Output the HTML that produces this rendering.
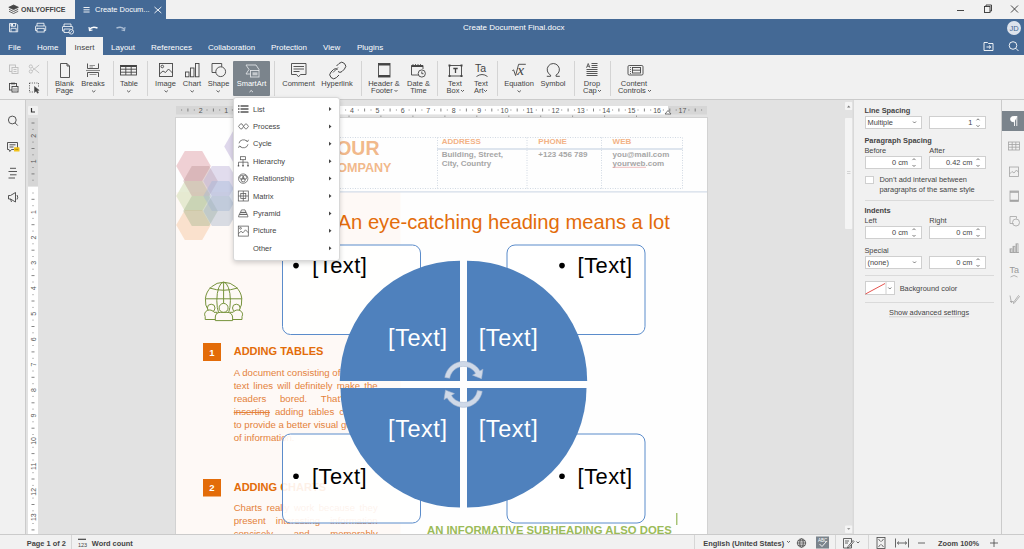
<!DOCTYPE html>
<html><head><meta charset="utf-8">
<style>
*{box-sizing:border-box}
html,body{margin:0;padding:0}
body{width:1024px;height:549px;overflow:hidden;position:relative;background:#f1f1f1;font-family:"Liberation Sans",sans-serif;color:#444;font-size:8.5px}
.a{position:absolute}
svg{position:absolute;overflow:visible}
#titlebar{left:0;top:0;width:1024px;height:19px;background:#f1f1f1}
#header{left:0;top:19px;width:1024px;height:36px;background:#446995}
#toolbar{left:0;top:55px;width:1024px;height:45px;background:#f1f1f1;border-bottom:1px solid #cbcbcb}
#lside{left:0;top:100px;width:26px;height:434px;background:#f1f1f1;border-right:1px solid #cbcbcb}
#docarea{left:26px;top:100px;width:827px;height:434px;background:#e2e2e2;overflow:hidden}
#rpanel{left:854px;top:100px;width:147px;height:434px;background:#f1f1f1}
#rcol{left:1001px;top:100px;width:23px;height:434px;background:#f1f1f1;border-left:1px solid #cbcbcb}
#status{left:0;top:534px;width:1024px;height:15px;background:#f1f1f1;border-top:1px solid #cbcbcb}
.tl{font-size:7.5px;line-height:7px;color:#444;text-align:center;transform:translateX(-50%);white-space:nowrap}
.body{width:144px;font-size:9.6px;line-height:12.96px;color:#e4823b}
.j{text-align:justify;text-align-last:justify;white-space:nowrap}
.mi{left:253px;font-size:7.5px;line-height:10px;color:#444;white-space:nowrap}
.pl{font-size:7.4px;line-height:10px;color:#444;white-space:nowrap}
.inp{background:#fff;border:1px solid #cfcfcf;font-size:7.4px;line-height:11.7px;color:#444;text-align:right;white-space:nowrap}
.st{font-size:7.4px;font-weight:bold;line-height:10px;color:#444;white-space:nowrap}
.tab{position:absolute;top:37.5px;height:18px;line-height:19px;color:#fff;font-size:8px}
</style></head><body>
<div id="titlebar" class="a"></div>
<div id="header" class="a"></div>
<div id="toolbar" class="a"></div>

<!-- TITLEBAR -->
<svg style="left:0;top:0" width="1024" height="19">
  <g fill="none" stroke="#444" stroke-width="0.8">
    <path d="M13.6 5 L18.4 7.3 L13.6 9.6 L8.8 7.3 Z" fill="#444"/>
    <path d="M9 9.3 L13.6 11.5 L18.2 9.3"/>
    <path d="M9 11.3 L13.6 13.5 L18.2 11.3"/>
  </g>
  <rect x="75" y="0" width="91" height="19" fill="#446995"/>
  <g stroke="#fff" stroke-width="0.9" fill="none">
    <path d="M83.5 7.5H89.6M83.5 9.8H89.6M83.5 12H89.6"/>
    <path d="M154.5 7L161.3 13M161.3 7L154.5 13"/>
  </g>
  <g stroke="#333" stroke-width="0.9" fill="none">
    <path d="M957 10.5H964"/>
    <rect x="984.5" y="6.5" width="5.5" height="6"/>
    <path d="M986 6.5V5H991.5V11H990"/>
    <path d="M1011 5.5L1018 12.5M1018 5.5L1011 12.5"/>
  </g>
</svg>
<div class="a" style="left:21px;top:4.5px;font-weight:bold;font-size:7px;color:#444;line-height:10px;letter-spacing:0">ONLYOFFICE</div>
<div class="a" style="left:95px;top:4.5px;font-size:7.5px;color:#fff;line-height:10px">Create Docum...</div>
<!-- HEADER -->
<svg style="left:0;top:19px" width="1024" height="36">
  <g stroke="#fff" stroke-width="0.8" fill="none">
    <!-- save -->
    <path d="M9.5 4.5H16.2L17.7 6V12.8H9.5Z"/>
    <path d="M11 4.5V7.3H15.5V4.5"/>
    <rect x="11.2" y="5" width="1.8" height="1.8" fill="#fff" stroke="none"/>
    <path d="M11 12.8V9.3H16.2V12.8"/>
    <!-- print -->
    <path d="M37 7V4.3H44V7"/>
    <path d="M37 11.5H35.5V7.5Q35.5 7 36 7H45.2Q45.7 7 45.7 7.5V11.5H44.2"/>
    <rect x="37" y="9.3" width="7.2" height="3.7"/>
    <!-- quick print -->
    <path d="M64 7.5V5H71V7.5"/>
    <path d="M64 12H62.5V8Q62.5 7.5 63 7.5H72.2Q72.7 7.5 72.7 8V10.5"/>
    <path d="M69 13.5H64V10H70.5"/>
    <circle cx="71.3" cy="12.8" r="2.3" fill="#446995"/>
    <path d="M70.2 13.9L72.6 11.5" stroke-width="0.7"/>
    <!-- undo -->
    <path d="M89.5 10.5 Q92 7 97.5 9" stroke-width="1.6"/>
    <path d="M89 8 L89.5 11.5 L92.5 11" stroke-width="1.2"/>
  </g>
  <g stroke="#a9bcd3" stroke-width="1.4" fill="none">
    <path d="M124.5 10.5 Q122 7 116.5 9"/>
    <path d="M125 8 L124.5 11.5 L121.5 11" stroke-width="1.1"/>
  </g>
  <circle cx="1014" cy="9" r="7" fill="#dde3ec"/>
  <text x="1014" y="12" font-size="7.5" fill="#446995" text-anchor="middle" font-family="Liberation Sans">JD</text>
  <g stroke="#fff" stroke-width="0.9" fill="none">
    <path d="M984 23.5H987.5L988.5 24.5H993V31.5H984Z"/>
    <path d="M986.5 28H990.5M989 26.5L990.8 28L989 29.5"/>
    <circle cx="1013" cy="26.5" r="3.8"/>
    <path d="M1015.8 29.3L1018.5 32"/>
  </g>
</svg>
<div class="a" style="left:463px;top:23px;font-size:8px;color:#fff;line-height:10px">Create Document Final.docx</div>
<div class="a" style="left:66px;top:37px;width:37px;height:18px;background:#f1f1f1"></div>
<div class="tab" style="left:8px">File</div>
<div class="tab" style="left:37px">Home</div>
<div class="tab" style="left:74.5px;color:#444">Insert</div>
<div class="tab" style="left:111px">Layout</div>
<div class="tab" style="left:151px">References</div>
<div class="tab" style="left:208px">Collaboration</div>
<div class="tab" style="left:271px">Protection</div>
<div class="tab" style="left:323px">View</div>
<div class="tab" style="left:357px">Plugins</div>


<!-- TOOLBAR -->
<div class="a" style="left:233px;top:61px;width:37px;height:34.5px;background:#7b848c;border-radius:1px"></div>
<svg style="left:0;top:0" width="1024" height="100">
  <g stroke="#d4d4d4" stroke-width="1">
    <path d="M47.5 61V96M113.5 61V96M147.5 61V96M274.5 61V96M361.5 61V96M437.5 61V96M497.5 61V96M574.5 61V96M610.5 61V96"/>
  </g>
  <g fill="none" stroke="#bdbdbd" stroke-width="0.9">
    <!-- copy disabled -->
    <rect x="9.5" y="65" width="6" height="6.5"/>
    <rect x="12" y="67.5" width="6" height="6" fill="#f1f1f1"/>
    <path d="M13.5 69.5H16.5M13.5 71.5H16.5"/>
    <!-- cut disabled -->
    <circle cx="30.8" cy="66.5" r="1.6"/><circle cx="30.8" cy="71.5" r="1.6"/>
    <path d="M32.2 67.3L39.2 73M32.2 70.7L39.2 65"/>
  </g>
  <g fill="none" stroke="#444" stroke-width="0.9">
    <!-- paste -->
    <rect x="9.5" y="83.5" width="7" height="6.5"/>
    <path d="M11 83.5H15" stroke-width="1.6"/>
    <rect x="12" y="86.5" width="6" height="5.5" fill="#f1f1f1"/>
    <path d="M14 88V91M16 88V91" stroke="#777"/>
    <!-- select all -->
    <path d="M29.5 83V92M29.5 83H38.5V87M29.5 92H33" stroke-dasharray="1 1.3"/>
    <path d="M34.5 86.5L34.5 92.5L36 91L37.5 93.3L38.5 92.7L37.2 90.5L39.2 90.3Z" fill="#444" stroke-width="0.5"/>
    <!-- blank page -->
    <path d="M60.5 63.5H67L69.5 66V77.5H60.5Z"/>
    <path d="M67 63.5V66H69.5"/>
    <!-- breaks -->
    <path d="M87.5 63.5V68.5H98.5V63.5"/>
    <path d="M89.5 65.5H95M89.5 67H93" stroke="#888"/>
    <path d="M86 70.5H100" stroke="#888" stroke-width="1.1"/>
    <path d="M87.5 77V72.5H98.5V77"/>
    <path d="M89.5 74.5H96.5" stroke="#888"/>
    <!-- table -->
    <rect x="120.5" y="65.5" width="16" height="9.5"/>
    <path d="M120.5 66H136.5" stroke-width="2"/>
    <path d="M120.5 69.2H136.5M120.5 72.2H136.5M125.8 65.5V75M131.2 65.5V75"/>
    <!-- image -->
    <rect x="159.5" y="63.5" width="13" height="13"/>
    <circle cx="162.3" cy="66.5" r="1.3"/>
    <path d="M159.5 74L163 71L165.5 72.5L168.5 69L172.5 73"/>
    <!-- chart -->
    <rect x="185.5" y="72" width="3.5" height="4.8"/>
    <rect x="190.5" y="68" width="3.5" height="8.8"/>
    <rect x="195.5" y="63.5" width="3.5" height="13.3"/>
    <!-- shape -->
    <path d="M216 72.5H212V63.5H221.7V66.8"/>
    <circle cx="220.7" cy="71.7" r="4.9"/>
    <!-- comment -->
    <path d="M291.5 63.5H306V74.5H300.5L298.5 76.8L296.5 74.5H291.5Z"/>
    <path d="M293.5 66.5H304M293.5 69H304M293.5 71.5H299.5"/>
    <!-- hyperlink -->
    <path d="M333 72.5L338 67.5" />
    <path d="M336.5 66L339 63.5A3 3 0 0 1 344.5 69L342 71.5A3 3 0 0 1 338 71.5" stroke-width="1"/>
    <path d="M337.5 69.5A3 3 0 0 0 333.5 69.5L331 72A3 3 0 0 0 336.5 77.5L339 75" stroke-width="1"/>
    <!-- header footer -->
    <rect x="378.5" y="63.5" width="11.5" height="13.5"/>
    <path d="M378.5 64.5H390M378.5 76H390" stroke-width="2"/>
    <!-- date & time -->
    <path d="M419 75H411.5V65.5H423V69"/>
    <path d="M411.5 66.2H423" stroke-width="1.6"/>
    <path d="M413 64V65.5M415.5 64V65.5M418 64V65.5M420.5 64V65.5" stroke-width="0.8"/>
    <circle cx="421.8" cy="73.5" r="3.6" fill="#f1f1f1"/>
    <path d="M421.8 71.5V73.7H423.5"/>
    <!-- text box -->
    <rect x="449.5" y="65.5" width="12" height="10.5"/>
    <rect x="448.5" y="64.5" width="2" height="2" fill="#444" stroke="none"/>
    <rect x="460.5" y="64.5" width="2" height="2" fill="#444" stroke="none"/>
    <rect x="448.5" y="75" width="2" height="2" fill="#444" stroke="none"/>
    <rect x="460.5" y="75" width="2" height="2" fill="#444" stroke="none"/>
    <path d="M453.3 68.5H457.7M455.5 68.5V73" stroke-width="1.3"/>
    <!-- drop cap -->
    <path d="M591.5 63.5H597.5M591.5 65.5H597.5M591.5 67.5H597.5M586.5 69.5H597.5M586.5 71.5H597.5M586.5 73.5H597.5M586.5 75.5H597.5"/>
    <path d="M586.5 67.8L588.2 63.5L590 67.8M587.2 66.3H589.3" stroke-width="0.8"/>
    <!-- content controls -->
    <rect x="628" y="65.5" width="15" height="9.5" rx="1.2"/>
    <path d="M630 67.5H631M630 69.5H631M630 71.5H631M630 73.5H631" stroke-width="0.8"/>
    <rect x="632.5" y="67.5" width="8" height="5.5"/>
    <path d="M632.5 70.2H640.5"/>
  </g>
  <g fill="none" stroke="#f1f1f1" stroke-width="0.9">
    <path d="M246 65H256L259 69.5L256 74H246L249 69.5Z" stroke="#dfe2e5"/>
    <rect x="250.5" y="70.5" width="8.5" height="6.5" fill="#7b848c" stroke="#dfe2e5"/>
    <rect x="252.5" y="72.3" width="5" height="3" fill="#c5c9cd" stroke="none"/>
  </g>
  <!-- text art -->
  <text x="475" y="72" font-family="Liberation Sans" font-size="10.5" fill="#444">Ta</text>
  <path d="M476.5 76.5Q482 72.5 487.5 76.5" fill="none" stroke="#444" stroke-width="0.9"/>
  <!-- equation -->
  <text x="517.3" y="75.3" font-family="Liberation Serif" font-size="15.5" font-style="italic" fill="#444">x</text>
  <path d="M512.3 70.6L513.6 69.9L515.6 75.6L518.6 64.3H525.8" fill="none" stroke="#444" stroke-width="0.9"/>
  <!-- symbol -->
  <path d="M546.8 76.3H550.6V75.1A6.1 6.1 0 1 1 556 75.1V76.3H559.8" fill="none" stroke="#444" stroke-width="0.95"/>
  <!-- chevrons -->
  <g fill="none" stroke="#444" stroke-width="0.85">
    <path d="M92 90.5L93.7 92L95.4 90.5M127 90.5L128.7 92L130.4 90.5M164.5 90.5L166.2 92L167.9 90.5M190.5 90.5L192.2 92L193.9 90.5M216.5 90.5L218.2 92L219.9 90.5M517.5 90.5L519.2 92L520.9 90.5"/>
    <path d="M394.5 90L396 91.5L397.5 90M461 90L462.5 91.5L464 90M484 90L485.5 91.5L487 90M598 90L599.5 91.5L601 90M648 90L649.5 91.5L651 90"/>
  </g>
  <path d="M249.5 92L251.2 90.5L252.9 92" fill="none" stroke="#fff" stroke-width="0.8"/>
</svg>
<div class="a tl" style="left:64.5px;top:80px">Blank<br>Page</div>
<div class="a tl" style="left:93px;top:80px">Breaks</div>
<div class="a tl" style="left:129px;top:80px">Table</div>
<div class="a tl" style="left:165.5px;top:80px">Image</div>
<div class="a tl" style="left:192px;top:80px">Chart</div>
<div class="a tl" style="left:218.5px;top:80px">Shape</div>
<div class="a tl" style="left:251.5px;top:80px;color:#fff">SmartArt</div>
<div class="a tl" style="left:298.5px;top:80px">Comment</div>
<div class="a tl" style="left:337px;top:80px">Hyperlink</div>
<div class="a tl" style="left:384px;top:80px">Header &amp;<br>Footer&nbsp;&nbsp;</div>
<div class="a tl" style="left:418.5px;top:80px">Date &amp;<br>Time</div>
<div class="a tl" style="left:455px;top:80px">Text<br>Box&nbsp;&nbsp;</div>
<div class="a tl" style="left:481px;top:80px">Text<br>Art&nbsp;&nbsp;</div>
<div class="a tl" style="left:519px;top:80px">Equation</div>
<div class="a tl" style="left:553px;top:80px">Symbol</div>
<div class="a tl" style="left:592px;top:80px">Drop<br>Cap&nbsp;&nbsp;</div>
<div class="a tl" style="left:634px;top:80px">Content<br>Controls&nbsp;&nbsp;</div>

<div id="lside" class="a"></div>
<div id="docarea" class="a"></div>
<!-- LEFT SIDEBAR -->
<svg style="left:0;top:0" width="30" height="549">
  <g fill="none" stroke="#444" stroke-width="0.9">
    <circle cx="12.3" cy="120" r="3.9"/>
    <path d="M15 122.8L17.8 125.6"/>
    <path d="M7.5 142.5H17.5V149.5H11.5L9.8 151.5L9 149.5H7.5Z"/>
    <path d="M9.5 144.8H15.5M9.5 147H13.5"/>
    <path d="M10 168.3H16M8.5 171.5H17M10 174.8H16.5M8.5 178H15"/>
    <path d="M8.5 195.5H10.5L15.5 192.5V202L10.5 199H8.5Z"/>
    <path d="M17 195Q18.5 197.3 17 199.5" />
    <path d="M10.5 199L11.5 202"/>
  </g>
  <rect x="14" y="147.3" width="5.5" height="4.2" rx="0.6" fill="#f1c21b"/>
  <path d="M15.2 149.4H18.3" stroke="#8a7000" stroke-width="0.6"/>
</svg>


<!-- DOC AREA -->
<svg style="left:0;top:0" width="1024" height="549">
  <!-- horizontal ruler -->
  <rect x="176" y="106" width="531" height="8.5" fill="#d6d6d6"/>
  <rect x="251" y="106" width="417" height="8.5" fill="#fff"/>
  <!-- corner -->
  <rect x="28" y="106" width="10" height="9" fill="#f1f1f1" rx="1"/>
  <path d="M31.5 108V112H35" fill="none" stroke="#333" stroke-width="1.2"/>
  <!-- vertical ruler -->
  <rect x="28" y="118" width="10" height="416" fill="#fff"/>
  <rect x="28" y="118" width="10" height="68.6" fill="#d6d6d6"/>
  <g font-family="Liberation Sans" font-size="7" fill="#555"><text x="200.6" y="112.8" text-anchor="middle">2</text><text x="226.1" y="112.8" text-anchor="middle">1</text><text x="275.6" y="112.8" text-anchor="middle">1</text><text x="301.1" y="112.8" text-anchor="middle">2</text><text x="326.5" y="112.8" text-anchor="middle">3</text><text x="351.9" y="112.8" text-anchor="middle">4</text><text x="377.4" y="112.8" text-anchor="middle">5</text><text x="402.8" y="112.8" text-anchor="middle">6</text><text x="428.2" y="112.8" text-anchor="middle">7</text><text x="453.6" y="112.8" text-anchor="middle">8</text><text x="479.1" y="112.8" text-anchor="middle">9</text><text x="504.5" y="112.8" text-anchor="middle">10</text><text x="529.9" y="112.8" text-anchor="middle">11</text><text x="555.4" y="112.8" text-anchor="middle">12</text><text x="580.8" y="112.8" text-anchor="middle">13</text><text x="606.2" y="112.8" text-anchor="middle">14</text><text x="631.6" y="112.8" text-anchor="middle">15</text><text x="657.1" y="112.8" text-anchor="middle">16</text><text x="682.5" y="112.8" text-anchor="middle">17</text><text x="0" y="0" transform="translate(35.8 135.7) rotate(-90)" text-anchor="middle">2</text><text x="0" y="0" transform="translate(35.8 161.2) rotate(-90)" text-anchor="middle">1</text><text x="0" y="0" transform="translate(35.8 212.0) rotate(-90)" text-anchor="middle">1</text><text x="0" y="0" transform="translate(35.8 237.5) rotate(-90)" text-anchor="middle">2</text><text x="0" y="0" transform="translate(35.8 262.9) rotate(-90)" text-anchor="middle">3</text><text x="0" y="0" transform="translate(35.8 288.3) rotate(-90)" text-anchor="middle">4</text><text x="0" y="0" transform="translate(35.8 313.8) rotate(-90)" text-anchor="middle">5</text><text x="0" y="0" transform="translate(35.8 339.2) rotate(-90)" text-anchor="middle">6</text><text x="0" y="0" transform="translate(35.8 364.6) rotate(-90)" text-anchor="middle">7</text><text x="0" y="0" transform="translate(35.8 390.0) rotate(-90)" text-anchor="middle">8</text><text x="0" y="0" transform="translate(35.8 415.5) rotate(-90)" text-anchor="middle">9</text><text x="0" y="0" transform="translate(35.8 440.9) rotate(-90)" text-anchor="middle">10</text><text x="0" y="0" transform="translate(35.8 466.3) rotate(-90)" text-anchor="middle">11</text><text x="0" y="0" transform="translate(35.8 491.8) rotate(-90)" text-anchor="middle">12</text><text x="0" y="0" transform="translate(35.8 517.2) rotate(-90)" text-anchor="middle">13</text></g>
  <g stroke="#666" stroke-width="0.8" fill="none"><path d="M181.6 109.5V110.5M187.9 108.5V111.5M194.3 109.5V110.5M207.0 109.5V110.5M213.4 108.5V111.5M219.7 109.5V110.5M232.4 109.5V110.5M238.8 108.5V111.5M245.1 109.5V110.5M256.6 109.5V110.5M262.9 108.5V111.5M269.3 109.5V110.5M282.0 109.5V110.5M288.3 108.5V111.5M294.7 109.5V110.5M307.4 109.5V110.5M313.8 108.5V111.5M320.1 109.5V110.5M332.8 109.5V110.5M339.2 108.5V111.5M345.6 109.5V110.5M358.3 109.5V110.5M364.6 108.5V111.5M371.0 109.5V110.5M383.7 109.5V110.5M390.1 108.5V111.5M396.4 109.5V110.5M409.1 109.5V110.5M415.5 108.5V111.5M421.9 109.5V110.5M434.6 109.5V110.5M440.9 108.5V111.5M447.3 109.5V110.5M460.0 109.5V110.5M466.4 108.5V111.5M472.7 109.5V110.5M485.4 109.5V110.5M491.8 108.5V111.5M498.1 109.5V110.5M510.9 109.5V110.5M517.2 108.5V111.5M523.6 109.5V110.5M536.3 109.5V110.5M542.6 108.5V111.5M549.0 109.5V110.5M561.7 109.5V110.5M568.1 108.5V111.5M574.4 109.5V110.5M587.1 109.5V110.5M593.5 108.5V111.5M599.9 109.5V110.5M612.6 109.5V110.5M618.9 108.5V111.5M625.3 109.5V110.5M638.0 109.5V110.5M644.4 108.5V111.5M650.7 109.5V110.5M663.4 109.5V110.5M669.8 108.5V111.5M676.2 109.5V110.5M688.9 109.5V110.5M695.2 108.5V111.5M701.6 109.5V110.5M31.5 123.0H34.5M32.5 129.4H33.5M32.5 142.1H33.5M31.5 148.5H34.5M32.5 154.8H33.5M32.5 167.5H33.5M31.5 173.9H34.5M32.5 180.2H33.5M32.5 193.0H33.5M31.5 199.3H34.5M32.5 205.7H33.5M32.5 218.4H33.5M31.5 224.7H34.5M32.5 231.1H33.5M32.5 243.8H33.5M31.5 250.2H34.5M32.5 256.5H33.5M32.5 269.2H33.5M31.5 275.6H34.5M32.5 282.0H33.5M32.5 294.7H33.5M31.5 301.0H34.5M32.5 307.4H33.5M32.5 320.1H33.5M31.5 326.5H34.5M32.5 332.8H33.5M32.5 345.5H33.5M31.5 351.9H34.5M32.5 358.3H33.5M32.5 371.0H33.5M31.5 377.3H34.5M32.5 383.7H33.5M32.5 396.4H33.5M31.5 402.8H34.5M32.5 409.1H33.5M32.5 421.8H33.5M31.5 428.2H34.5M32.5 434.5H33.5M32.5 447.3H33.5M31.5 453.6H34.5M32.5 460.0H33.5M32.5 472.7H33.5M31.5 479.0H34.5M32.5 485.4H33.5M32.5 498.1H33.5M31.5 504.5H34.5M32.5 510.8H33.5M32.5 523.5H33.5M31.5 529.9H34.5"/></g>
  <path d="M253.2 115.5V117.5M285.1 115.5V117.5M317.1 115.5V117.5M349.0 115.5V117.5M380.9 115.5V117.5M412.9 115.5V117.5M444.9 115.5V117.5M476.8 115.5V117.5M508.8 115.5V117.5M540.7 115.5V117.5M572.6 115.5V117.5M604.6 115.5V117.5M636.5 115.5V117.5" stroke="#888" stroke-width="0.8"/>
  <!-- indent marker -->
  <path d="M665 114L668 110.5L671 114Z" fill="#fff" stroke="#555" stroke-width="0.8"/>
  <!-- scrollbar -->
  <rect x="845" y="102" width="7.5" height="8" rx="1" fill="#f4f4f4"/>
  <path d="M847 107.5L848.7 105.5L850.4 107.5Z" fill="#777"/>
  <rect x="845" y="118" width="7.5" height="111" rx="1" fill="#f4f4f4"/>
  <path d="M847 171.5H850.5M847 173.5H850.5" stroke="#ccc" stroke-width="0.8"/>
  <rect x="845" y="525.5" width="7.5" height="7.5" rx="1" fill="#f4f4f4"/>
  <path d="M847 528L848.7 530L850.4 528Z" fill="#999"/>
  <rect x="852.5" y="100" width="1.5" height="434" fill="#d9d9d9"/>
</svg>
<div class="a" style="left:176px;top:118px;width:531px;height:416px;background:#fefefe;overflow:hidden;box-shadow:0 0 0 1px #d2d2d2" id="page">
<svg style="left:-176px;top:-118px" width="1024" height="549">
  <rect x="176" y="192" width="224.5" height="342" fill="#fef9f6"/>
  <!-- logo text -->
  <text x="379.5" y="155.4" font-family="Liberation Sans" font-weight="bold" font-size="19.5" fill="#f0b07c" fill-opacity="0.9" text-anchor="end">YOUR</text>
  <text x="391.5" y="171.7" font-family="Liberation Sans" font-weight="bold" font-size="12.6" fill="#f0b07c" fill-opacity="0.9" text-anchor="end">COMPANY</text>
  <!-- header table -->
  <g stroke="#c5cfdc" stroke-width="0.8" stroke-dasharray="1 1.5" fill="none">
    <path d="M300 137.5H682.5M300 188.5H682.5M437.5 137.5V188.5M527 137.5V188.5M601.5 137.5V188.5M682.5 137.5V188.5"/>
  </g>
  <path d="M437 149H682.5" stroke="#d3dce8" stroke-width="1.6"/>
  <path d="M236 191.8H707" stroke="#d3dce8" stroke-width="1.2"/>
  <g font-family="Liberation Sans" font-weight="bold" font-size="8">
    <text x="441.7" y="144.3" fill="#f3b386">ADDRESS</text>
    <text x="538.3" y="144.3" fill="#f3b386">PHONE</text>
    <text x="612.6" y="144.3" fill="#f3b386">WEB</text>
    <g fill="#a6a6a6">
    <text x="441.7" y="156.7">Building, Street,</text>
    <text x="441.7" y="165.8">City, Country</text>
    <text x="538.3" y="156.7">+123 456 789</text>
    <text x="612.6" y="156.7">you@mail.com</text>
    <text x="612.6" y="165.8">yourweb.com</text>
    </g>
  </g>
  <path d="M612.6 167.3H646" stroke="#e8a0a0" stroke-width="0.7"/>
  <polygon points="176.2,166.0 184.8,151.0 202.2,151.0 210.8,166.0 202.2,181.0 184.8,181.0" fill="#d98b96" fill-opacity="0.4"/><polygon points="224.2,146.5 232.8,131.5 250.2,131.5 258.8,146.5 250.2,161.5 232.8,161.5" fill="#b9a9d4" fill-opacity="0.45"/><polygon points="176.2,196.0 184.8,181.0 202.2,181.0 210.8,196.0 202.2,211.0 184.8,211.0" fill="#c9d6a4" fill-opacity="0.45"/><polygon points="183.2,181.0 191.8,166.0 209.2,166.0 217.8,181.0 209.2,196.0 191.8,196.0" fill="#b58a8a" fill-opacity="0.35"/><polygon points="203.3,181.0 211.9,166.0 229.2,166.0 237.9,181.0 229.2,196.0 211.9,196.0" fill="#b7a9d4" fill-opacity="0.4"/><polygon points="176.2,225.0 184.8,210.0 202.2,210.0 210.8,225.0 202.2,240.0 184.8,240.0" fill="#f7c49b" fill-opacity="0.45"/><polygon points="183.2,211.0 191.8,196.0 209.2,196.0 217.8,211.0 209.2,226.0 191.8,226.0" fill="#9fb58c" fill-opacity="0.4"/><polygon points="203.3,196.0 211.9,181.0 229.2,181.0 237.9,196.0 229.2,211.0 211.9,211.0" fill="#9fb6d9" fill-opacity="0.4"/><polygon points="203.3,211.0 211.9,196.0 229.2,196.0 237.9,211.0 229.2,226.0 211.9,226.0" fill="#9fb0c6" fill-opacity="0.4"/>
  
  <!-- heading -->
  <text x="337.6" y="228.5" font-family="Liberation Sans" font-size="20.2" fill="#e36c0a">An eye-catching heading means a lot</text>
  <!-- globe people -->
  <g fill="none" stroke="#77933c" stroke-width="1">
    <path d="M208.6 311A18.3 18.3 0 1 1 238.6 311"/>
    <path d="M205.3 298.8H242M209.5 288Q223.6 292.5 237.7 288"/>
    <ellipse cx="223.6" cy="300.5" rx="6.8" ry="18.3"/>
    <path d="M223.6 282.2V303.5"/>
    <circle cx="211.2" cy="308" r="3.8" fill="#fef9f6"/>
    <circle cx="236.3" cy="308" r="3.8" fill="#fef9f6"/>
    <path d="M205.2 319.5V316.5A4.5 4 0 0 1 214 312.3H217V319.5Z" fill="#fef9f6"/>
    <path d="M242 319.5V316.5A4.5 4 0 0 0 233.2 312.3H230.2V319.5Z" fill="#fef9f6"/>
    <circle cx="223.6" cy="307.9" r="4.5" fill="#fef9f6"/>
    <path d="M215.3 320.6V317A5 5 0 0 1 220.3 312.4H226.9A5 5 0 0 1 232.6 317V320.6Z" fill="#fef9f6"/>
  </g>
  <!-- numbers -->
  <rect x="203" y="343" width="18" height="18" fill="#e36c09"/>
  <text x="212" y="355.6" font-family="Liberation Sans" font-weight="bold" font-size="9.5" fill="#fff" text-anchor="middle">1</text>
  <rect x="203" y="479" width="18" height="17.5" fill="#e36c09"/>
  <text x="212" y="491.3" font-family="Liberation Sans" font-weight="bold" font-size="9.5" fill="#fff" text-anchor="middle">2</text>
  <text x="233.7" y="355" font-family="Liberation Sans" font-weight="bold" font-size="11" fill="#e36c09">ADDING TABLES</text>
  <text x="233.7" y="491" font-family="Liberation Sans" font-weight="bold" font-size="11" fill="#e36c09">ADDING CHARTS</text>
  <text x="427" y="533.9" font-family="Liberation Sans" font-weight="bold" font-size="11.3" fill="#9bbb59">AN INFORMATIVE SUBHEADING ALSO DOES</text>
</svg>
<div class="a body" style="left:57.7px;top:249px">
  <div style="white-space:nowrap">A document consisting of only</div>
  <div class="j">text lines will definitely make the</div>
  <div class="j">readers bored. That&#8217;s why</div>
  <div class="j"><s>inserting</s> adding tables can help</div>
  <div class="j">to provide a better visual guidance</div>
  <div>of information.</div>
</div>
<div class="a body" style="left:57.7px;top:383.6px">
  <div class="j">Charts really work because they</div>
  <div class="j">present interesting information</div>
  <div class="j">concisely and memorably</div>
</div>

<!-- SMARTART -->
<svg style="left:-176px;top:-118px" width="1024" height="549">
  <g fill="#fff" fill-opacity="0.9" stroke="#5b8ccb" stroke-width="1">
    <rect x="282.5" y="245" width="138" height="89.5" rx="8"/>
    <rect x="507" y="245" width="138" height="89.5" rx="8"/>
    <rect x="282.5" y="434" width="138" height="89" rx="8"/>
    <rect x="507" y="434" width="138" height="89" rx="8"/>
  </g>
  <g font-family="Liberation Sans" font-size="21.9" fill="#000" letter-spacing="0.45">
    <circle cx="296" cy="265.6" r="2.8"/><text x="312.3" y="272.5">[Text]</text>
    <circle cx="562" cy="265.6" r="2.8"/><text x="577.6" y="272.5">[Text]</text>
    <circle cx="296" cy="476.2" r="2.8"/><text x="312" y="484.3">[Text]</text>
    <circle cx="562" cy="476.2" r="2.8"/><text x="577.6" y="484.3">[Text]</text>
  </g>
  <g fill="#4f81bd">
    <path d="M460 381V260.8A120.2 120.2 0 0 0 339.8 381Z"/>
    <path d="M467 381V260.8A120.2 120.2 0 0 1 587.2 381Z"/>
    <path d="M460 388V507.5A119.5 119.5 0 0 1 340.5 388Z"/>
    <path d="M467 388V507.5A119.5 119.5 0 0 0 586.5 388Z"/>
  </g>
  <g font-family="Liberation Sans" font-size="23.5" fill="#fff" text-anchor="middle" letter-spacing="0.55">
    <text x="417.8" y="345.7">[Text]</text>
    <text x="508.5" y="345.7">[Text]</text>
    <text x="417.8" y="436.5">[Text]</text>
    <text x="508.5" y="436.5">[Text]</text>
  </g>
  <g fill="#cfd9e8" stroke="#a9b9d0" stroke-width="0.6">
    <path d="M444.83 377.44L445.23 375.55L445.83 373.70L446.60 371.93L447.56 370.25L448.68 368.67L449.96 367.21L451.38 365.90L452.93 364.73L454.59 363.73L456.34 362.91L458.17 362.27L460.06 361.82L461.98 361.56L463.91 361.50L465.84 361.65L467.75 361.98L469.61 362.52L471.41 363.24L473.13 364.14L474.74 365.21L476.24 366.44L477.60 367.81L478.81 369.32L479.87 370.95L482.94 369.17L481.50 378.67L472.55 375.17L475.62 373.40L474.84 372.20L473.94 371.08L472.94 370.06L471.83 369.15L470.63 368.35L469.36 367.69L468.03 367.15L466.65 366.76L465.24 366.51L463.81 366.40L462.37 366.45L460.95 366.63L459.55 366.97L458.20 367.44L456.90 368.05L455.67 368.79L454.52 369.66L453.47 370.63L452.52 371.71L451.69 372.88L450.98 374.13L450.41 375.44L449.97 376.81L449.67 378.21Z"/>
    <path d="M482.17 391.36L481.77 393.25L481.17 395.10L480.40 396.87L479.44 398.55L478.32 400.13L477.04 401.59L475.62 402.90L474.07 404.07L472.41 405.07L470.66 405.89L468.83 406.53L466.94 406.98L465.02 407.24L463.09 407.30L461.16 407.15L459.25 406.82L457.39 406.28L455.59 405.56L453.87 404.66L452.26 403.59L450.76 402.36L449.40 400.99L448.19 399.48L447.13 397.85L444.06 399.62L445.50 390.13L454.45 393.62L451.38 395.40L452.16 396.60L453.06 397.72L454.06 398.74L455.17 399.65L456.37 400.45L457.64 401.11L458.97 401.65L460.35 402.04L461.76 402.29L463.19 402.40L464.63 402.35L466.05 402.17L467.45 401.83L468.80 401.36L470.10 400.75L471.33 400.01L472.48 399.14L473.53 398.17L474.48 397.09L475.31 395.92L476.02 394.67L476.59 393.36L477.03 391.99L477.33 390.59Z"/>
  </g>
  <path d="M676.8 513V525" stroke="#8bb04a" stroke-width="1.1"/>
</svg>
</div>


<!-- MENU -->
<div class="a" style="left:232.7px;top:96.5px;width:107.8px;height:164.3px;background:#fff;border:1px solid #d8d8d8;border-radius:3px;box-shadow:0 2px 5px rgba(0,0,0,0.18)"></div>
<svg style="left:0;top:0" width="1024" height="549">

  <g fill="none" stroke="#555" stroke-width="0.75">
    <!-- list -->
    <path d="M238 106H239.5M238 109H239.5M238 112H239.5" stroke-width="1.4"/>
    <path d="M240.5 106H248.5M240.5 109H248.5M240.5 112H248.5" stroke-width="1.6"/>
    <!-- process -->
    <path d="M238.5 126.4L240.5 123.9H242L243.5 126.4L242 128.9H240.5Z"/>
    <path d="M243.5 126.4L245.5 123.9H246.5L248.5 126.4L246.5 128.9H245.5Z"/>
    <!-- cycle -->
    <path d="M239 143.3A4.5 4 0 0 1 247 141.3M248 144.3A4.5 4 0 0 1 240 146.3"/>
    <path d="M246 140.3L247.5 141.8L248.5 139.8M241 147.3L239.5 145.8L238.5 147.8" stroke-width="0.8"/>
    <!-- hierarchy -->
    <rect x="240.5" y="156.7" width="5" height="3"/>
    <path d="M243 159.7V162.2M238.5 162.2H248M238.5 162.2V165.7M243 162.2V165.7M248 162.2V165.7"/>
    <path d="M237.8 165.7H239.2M242.3 165.7H243.7M247.3 165.7H248.7" stroke-width="1.4"/>
    <!-- relationship -->
    <circle cx="243.2" cy="178.6" r="4.7"/>
    <circle cx="241.7" cy="177.4" r="2"/><circle cx="244.7" cy="177.4" r="2"/><circle cx="243.2" cy="179.9" r="2"/>
    <!-- matrix -->
    <rect x="238.3" y="191.0" width="10" height="10"/>
    <rect x="240.8" y="193.5" width="5" height="5"/>
    <path d="M243.3 191.0V201.0M238.3 196.0H248.3"/>
    <!-- pyramid -->
    <path d="M240.5 212.4L241.5 209.9H245L246 212.4Z M239.5 214.4L240.2 212.4H246.3L247 214.4Z M238.5 216.9L239.2 214.4H247.3L248 216.9Z"/>
    <!-- picture -->
    <rect x="238.3" y="226.1" width="10" height="10"/>
    <path d="M238.3 233.8L241 231.3L243 232.8L245.5 229.8L248.3 232.8"/>
    <circle cx="240.5" cy="228.3" r="0.9"/>
  </g>

  <path d="M329 107.0L331.5 109.0L329 111.0ZM329 124.4L331.5 126.4L329 128.4ZM329 141.8L331.5 143.8L329 145.8ZM329 159.2L331.5 161.2L329 163.2ZM329 176.6L331.5 178.6L329 180.6ZM329 194.0L331.5 196.0L329 198.0ZM329 211.4L331.5 213.4L329 215.4ZM329 228.8L331.5 230.8L329 232.8ZM329 246.2L331.5 248.2L329 250.2Z" fill="#444"/>
</svg>
<div class="a mi" style="top:104.6px">List</div><div class="a mi" style="top:122.0px">Process</div><div class="a mi" style="top:139.4px">Cycle</div><div class="a mi" style="top:156.8px">Hierarchy</div><div class="a mi" style="top:174.2px">Relationship</div><div class="a mi" style="top:191.6px">Matrix</div><div class="a mi" style="top:209.0px">Pyramid</div><div class="a mi" style="top:226.4px">Picture</div><div class="a mi" style="top:243.8px">Other</div>

<div id="rpanel" class="a"></div>
<div id="rcol" class="a"></div>
<!-- RIGHT PANEL -->
<div class="a pl" style="left:864.4px;top:105.5px;font-weight:bold">Line Spacing</div>
<div class="a inp" style="left:864.5px;top:115.7px;width:57.5px;height:13.7px;padding-left:2px;text-align:left">Multiple</div>
<div class="a inp" style="left:929.3px;top:115.7px;width:57px;height:13.7px;padding-right:13px">1</div>
<div class="a pl" style="left:864.4px;top:135.7px;font-weight:bold">Paragraph Spacing</div>
<div class="a pl" style="left:864.4px;top:145.5px">Before</div>
<div class="a pl" style="left:929.3px;top:145.5px">After</div>
<div class="a inp" style="left:864.5px;top:155.6px;width:57.5px;height:13.6px;padding-right:13px">0 cm</div>
<div class="a inp" style="left:929.3px;top:155.6px;width:57px;height:13.6px;padding-right:13px">0.42 cm</div>
<div class="a" style="left:864.5px;top:175.7px;width:9px;height:8.5px;background:#fff;border:1px solid #cfcfcf"></div>
<div class="a pl" style="left:879.4px;top:175.2px;line-height:9.6px">Don&#8217;t add interval between<br>paragraphs of the same style</div>
<div class="a" style="left:864.5px;top:200.3px;width:129.5px;height:1px;background:#dadada"></div>
<div class="a pl" style="left:864.4px;top:205.9px;font-weight:bold">Indents</div>
<div class="a pl" style="left:864.4px;top:215.5px">Left</div>
<div class="a pl" style="left:929.3px;top:215.5px">Right</div>
<div class="a inp" style="left:864.5px;top:225.7px;width:57.5px;height:13.5px;padding-right:13px">0 cm</div>
<div class="a inp" style="left:929.3px;top:225.7px;width:57px;height:13.5px;padding-right:13px">0 cm</div>
<div class="a pl" style="left:864.4px;top:245.7px">Special</div>
<div class="a inp" style="left:864.5px;top:255.8px;width:57.5px;height:13.2px;padding-left:2px;text-align:left">(none)</div>
<div class="a inp" style="left:929.3px;top:255.8px;width:57px;height:13.2px;padding-right:13px">0 cm</div>
<div class="a" style="left:864.5px;top:275px;width:129.5px;height:1px;background:#dadada"></div>
<div class="a" style="left:864.5px;top:281.3px;width:30px;height:13.8px;background:#fff;border:1px solid #cfcfcf"></div>
<div class="a pl" style="left:899.7px;top:283.5px">Background color</div>
<div class="a" style="left:864.5px;top:302px;width:129.5px;height:1px;background:#dadada"></div>
<div class="a pl" style="left:889px;top:307.5px">Show advanced settings</div>
<svg style="left:0;top:0" width="1024" height="549">
  <g fill="none" stroke="#555" stroke-width="0.8">
    <path d="M913 121.5L914.5 123L916 121.5M913 261.5L914.5 263L916 261.5"/>
    <path d="M976.5 120.3L978 118.8L979.5 120.3M976.5 125.2L978 126.7L979.5 125.2"/>
    <path d="M912.5 160.1L914 158.6L915.5 160.1M912.5 165L914 166.5L915.5 165"/>
    <path d="M976.5 160.1L978 158.6L979.5 160.1M976.5 165L978 166.5L979.5 165"/>
    <path d="M912.5 230.1L914 228.6L915.5 230.1M912.5 235L914 236.5L915.5 235"/>
    <path d="M976.5 230.1L978 228.6L979.5 230.1M976.5 235L978 236.5L979.5 235"/>
    <path d="M976.5 260.1L978 258.6L979.5 260.1M976.5 265L978 266.5L979.5 265"/>
    <path d="M888.3 287.5L889.8 289L891.3 287.5"/>
  </g>
  <path d="M886 282V294.5" stroke="#cfcfcf" stroke-width="1"/>
  <path d="M865.5 294L885 283.5" stroke="#e0403a" stroke-width="0.9"/>
  <path d="M889.5 316.8H968.5" stroke="#999" stroke-width="0.7" stroke-dasharray="1 1"/>
</svg>
<!-- RIGHT ICON COLUMN -->
<div class="a" style="left:1002px;top:111px;width:22px;height:20px;background:#7b848c"></div>
<svg style="left:0;top:0" width="1024" height="549">
  <path d="M1014.5 116.5V126M1016.8 116.5V126" stroke="#fff" stroke-width="0.9"/>
  <path d="M1017.2 116.5H1013.2A2.6 2.6 0 0 0 1013.2 121.7H1014.5" fill="#fff" stroke="#fff" stroke-width="0.9"/>
  <g fill="none" stroke="#a3a3a3" stroke-width="0.8">
    <rect x="1008.5" y="142" width="11" height="8"/>
    <path d="M1008.5 144.5H1019.5M1008.5 147.2H1019.5M1012.2 142V150M1015.8 142V150"/>
    <rect x="1009.5" y="167" width="9" height="9.5"/>
    <path d="M1009.5 174L1012 171.5L1014 173L1016.5 170L1018.5 172.5"/>
    <rect x="1010" y="191" width="8.5" height="10.5"/>
    <path d="M1010 192H1018.5M1010 200.5H1018.5" stroke-width="1.5"/>
    <path d="M1013.5 223.5H1010V216.5H1016.5V218.5"/>
    <circle cx="1016" cy="222.5" r="3.5"/>
    <path d="M1010 252.5H1019M1010.5 249V252.5M1013.5 246.5V252.5M1016.5 244V252.5" />
    <rect x="1010" y="248.8" width="2" height="3.7"/><rect x="1013" y="246.3" width="2" height="6.2"/><rect x="1016" y="243.8" width="2" height="8.7"/>
    <path d="M1010.5 277Q1014 274 1017.5 277"/>
    <path d="M1010 295.5L1011.5 303M1010 301.5H1013.5M1013 303L1018.5 295.5L1019.5 296.5L1014 303.5Z"/>
  </g>
  <text x="1009.5" y="273" font-family="Liberation Sans" font-size="9" fill="#999">Ta</text>
</svg>

<div id="status" class="a"></div>
<!-- STATUS BAR -->
<div class="a st" style="left:26.8px;top:538.5px">Page 1 of 2</div>
<div class="a st" style="left:91.8px;top:538.5px">Word count</div>
<div class="a st" style="left:703.3px;top:538.5px">English (United States)</div>
<div class="a st" style="left:938px;top:538.5px">Zoom 100%</div>
<svg style="left:0;top:0" width="1024" height="549">
  <path d="M71.5 535V549M694.5 535V549M835.5 535V549M868.5 535V549" stroke="#d6d6d6" stroke-width="1"/>
  <g fill="none" stroke="#444" stroke-width="0.8">
    <path d="M78 539.3H86" stroke-width="1.2"/>
    <text x="78" y="547" font-family="Liberation Sans" font-size="5.5" fill="#444" stroke="none">123</text>
    <path d="M787 541L788.5 542.5L790 541"/>
    <circle cx="801.5" cy="543" r="4.2"/>
    <ellipse cx="801.5" cy="543" rx="1.8" ry="4.2"/>
    <path d="M797.3 543H805.7M798 540.8H805M798 545.2H805"/>
  </g>
  <rect x="816" y="536.5" width="13" height="12" fill="#7b848c"/>
  <text x="818" y="542" font-family="Liberation Sans" font-size="4.5" fill="#fff">ABC</text>
  <path d="M819.5 544L822 546.5L826.5 541.5" fill="none" stroke="#fff" stroke-width="0.9"/>
  <g fill="none" stroke="#444" stroke-width="0.8">
    <path d="M843.5 538.5H851.5V548H843.5Z"/>
    <path d="M845 541H849M845 543H848"/>
    <path d="M848 546.5L853 540.5L854 541.5L849 547.5L847.5 548Z" fill="#f1f1f1"/>
    <path d="M856.5 541.5L858 543L859.5 541.5"/>
    <rect x="877" y="537.5" width="8" height="11"/>
    <path d="M878.5 539L880.5 541.5M883.5 539L881.5 541.5M878.5 547L880.5 544.5M883.5 547L881.5 544.5"/>
    <path d="M895.5 538.5V547.5M908.5 538.5V547.5M897.5 543H906.5M899 541.5L897.3 543L899 544.5M905 541.5L906.7 543L905 544.5"/>
    <path d="M918 543H925"/>
    <path d="M990 543H998M994 539V547"/>
  </g>
</svg>

</body></html>
